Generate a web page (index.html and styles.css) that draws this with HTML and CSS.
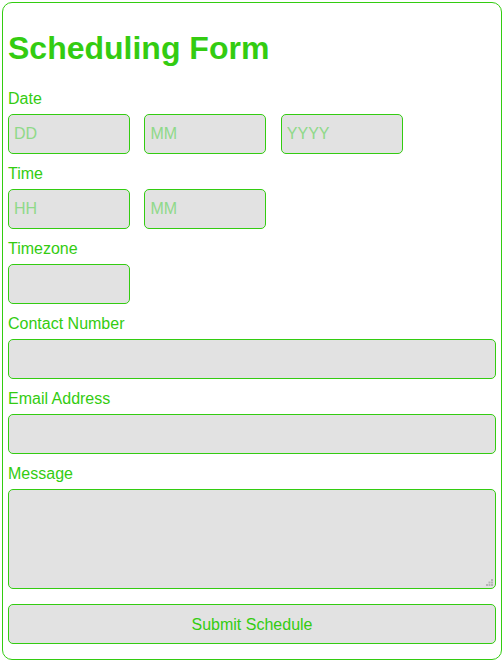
FILE: index.html
```html
<!DOCTYPE html>
<html>
<head>
<meta charset="utf-8">
<link rel="stylesheet" href="styles.css">
</head>
<body>
<form class="form">
  <h1 class="title">Scheduling Form</h1>
  <label class="label">Date</label>
  <div class="row">
    <input class="field short" type="text" placeholder="DD">
    <input class="field short" type="text" placeholder="MM">
    <input class="field short" type="text" placeholder="YYYY">
  </div>
  <label class="label">Time</label>
  <div class="row">
    <input class="field short" type="text" placeholder="HH">
    <input class="field short" type="text" placeholder="MM">
  </div>
  <label class="label">Timezone</label>
  <div class="row">
    <input class="field short" type="text">
  </div>
  <label class="label">Contact Number</label>
  <div class="row">
    <input class="field full" type="text">
  </div>
  <label class="label">Email Address</label>
  <div class="row">
    <input class="field full" type="text">
  </div>
  <label class="label">Message</label>
  <div class="row last">
    <textarea class="field full area"></textarea>
    <svg class="grip" width="7" height="7" viewBox="0 0 7 7" aria-hidden="true">
      <rect x="5" y="0" width="2" height="2" fill="#b5b5b5"/>
      <rect x="2.5" y="2.5" width="2" height="2" fill="#b5b5b5"/>
      <rect x="5" y="2.5" width="2" height="2" fill="#b5b5b5"/>
      <rect x="0" y="5" width="2" height="2" fill="#b5b5b5"/>
      <rect x="2.5" y="5" width="2" height="2" fill="#b5b5b5"/>
      <rect x="5" y="5" width="2" height="2" fill="#b5b5b5"/>
    </svg>
  </div>
  <button class="submit" type="button">Submit Schedule</button>
</form>
</body>
</html>
```
FILE: styles.css
```css
html, body {
  margin: 0;
  padding: 0;
  background: #ffffff;
}
body {
  padding: 2px;
  font-family: "Liberation Sans", Arial, sans-serif;
  font-size: 16px;
  color: #33cc11;
}
.form {
  box-sizing: border-box;
  width: 500px;
  height: 658px;
  border: 1px solid #33cc11;
  border-radius: 10px;
  padding: 5px;
  display: flex;
  flex-direction: column;
}
.title {
  font-size: 32px;
  font-weight: bold;
  line-height: 37px;
  margin: 22px 0 22px 0;
  color: #33cc11;
}
.label {
  display: block;
  line-height: 20px;
  height: 18px;
  margin: 0 0 7px 0;
  color: #33cc11;
}
.row {
  display: flex;
  gap: 14.4px;
  margin-bottom: 10px;
}
.row.last {
  margin-bottom: 15px;
  position: relative;
}
.field {
  box-sizing: border-box;
  height: 40px;
  background: #e2e2e2;
  border: 1px solid #33cc11;
  border-radius: 5px;
  padding: 0 5px;
  font-family: "Liberation Sans", Arial, sans-serif;
  font-size: 16px;
  color: #33cc11;
  outline: none;
}
.field::placeholder {
  color: #8fd989;
  opacity: 1;
}
.short {
  width: 122px;
}
.full {
  width: 488px;
}
.area {
  height: 100px;
  resize: none;
  padding: 5px;
}
.grip {
  position: absolute;
  right: 3px;
  bottom: 3px;
}
.submit {
  box-sizing: border-box;
  width: 488px;
  height: 40px;
  background: #e2e2e2;
  border: 1px solid #33cc11;
  border-radius: 5px;
  font-family: "Liberation Sans", Arial, sans-serif;
  font-size: 16px;
  color: #33cc11;
  padding: 2px 0 0 0;
}
```
